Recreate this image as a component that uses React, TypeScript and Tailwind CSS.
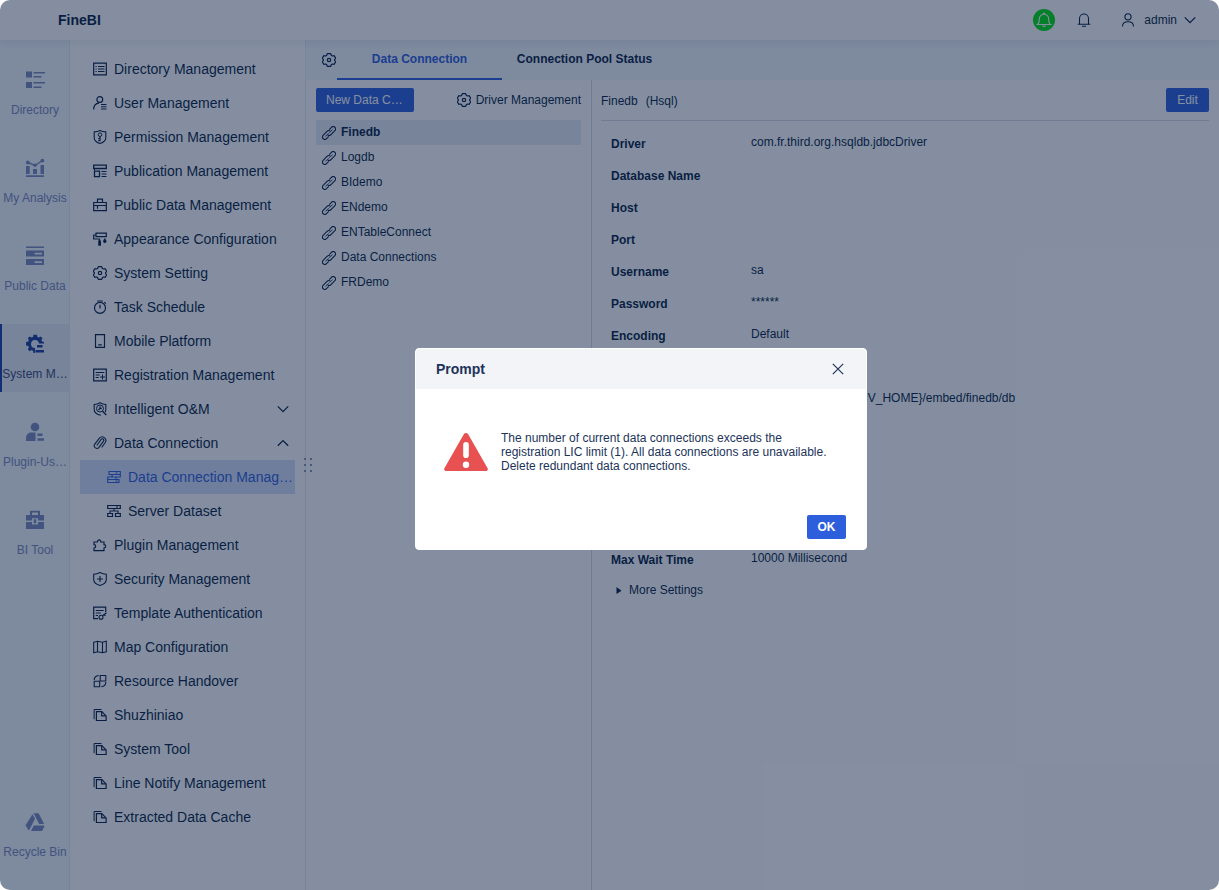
import { useState } from "react";
import type { ReactNode } from "react";

interface IconProps {
  children: ReactNode;
}

// Outline icons share a 14px grid, the rail icons a 20px one
function LineIcon({ children }: IconProps) {
  return (
    <svg
      className="size-3.5 shrink-0"
      viewBox="0 0 14 14"
      fill="none"
      stroke="currentColor"
      aria-hidden="true"
    >
      {children}
    </svg>
  );
}

function RailIcon({ children }: IconProps) {
  return (
    <svg className="size-5 shrink-0" viewBox="0 0 20 20" fill="currentColor" aria-hidden="true">
      {children}
    </svg>
  );
}

function GearIcon() {
  return (
    <LineIcon>
      <path d="M5.3 .7h3.4l.7 1.7 1 .6 1.8-.3 1.5 2.6-1.1 1.3v.8l1.1 1.3-1.5 2.6-1.8-.3-1 .6-.7 1.7H5.3l-.7-1.7-1-.6-1.800.3L.3 8.700l1.100-1.300v-.8L.3 5.300l1.500-2.600 1.800.3 1-.6z" strokeWidth="1.2" strokeLinejoin="round" />
      <circle cx="7" cy="7" r="1.7" strokeWidth="1.2" />
    </LineIcon>
  );
}

function LinkIcon() {
  return (
    <LineIcon>
      <g transform="rotate(-45 7 7)" strokeWidth="1.1">
        <path d="M9.300 6.500A2.400 2.400 0 0 0 7 4.500H1.200a2.400 2.400 0 0 0 0 4.800h3.200" />
        <path d="M4.700 7.500A2.400 2.400 0 0 0 7 9.500h5.800a2.400 2.400 0 0 0 0-4.800H9.600" />
        <path d="M2 6.900h4.500M7.500 7.100H12" strokeWidth=".8" />
      </g>
    </LineIcon>
  );
}

function CopyIcon() {
  return (
    <LineIcon>
      <path d="M1.100 11.200V1.500h7.400" />
      <path d="M3.400 3.600h5.400l4.300 4.300v4.600H3.400z" strokeWidth="1.2" />
      <path d="M8.700 3.600v4.200h4.200" strokeWidth="1.2" />
    </LineIcon>
  );
}

function Chevron({ up = false }: { up?: boolean }) {
  return (
    <svg className="size-3 shrink-0" viewBox="0 0 12 12" fill="none" stroke="currentColor" strokeWidth="1.3" aria-hidden="true">
      <path d={up ? "M.8 8.8 6 3.6l5.2 5.2" : "M.8 3.4 6 8.6l5.2-5.2"} />
    </svg>
  );
}

const railItems = [
  {
    label: "Directory",
    icon: (
      <RailIcon>
        <path d="M1 1.500h6v6H1zM1 12h6v6H1zM8.500 2H20v1.600H8.500zM8.500 6h8v1.600h-8zM8.500 12H20v1.600H8.500zM8.500 16.400h8V18h-8z" />
      </RailIcon>
    ),
  },
  {
    label: "My Analysis",
    icon: (
      <RailIcon>
        <path d="M1 8h3.700v8H1zM8 11h4v5H8zM15.500 7H19v9h-3.500zM1 17.200h18V19H1z" />
        <path d="m3 4.500 7 3 7.500-5" fill="none" stroke="currentColor" strokeWidth="1.5" />
        <circle cx="2.8" cy="4.5" r="1.9" />
        <circle cx="10" cy="7.3" r="1.7" />
        <circle cx="17.400" cy="2.6" r="1.900" />
      </RailIcon>
    ),
  },
  {
    label: "Public Data",
    icon: (
      <RailIcon>
        <path d="M1 .500h18V2H1z" />
        <path fillRule="evenodd" d="M1 4.500h18v6H1zM9.500 6.700v1.700H17V6.700zM1 13h18v6H1zM9.500 15.200v1.700H17v-1.700z" />
      </RailIcon>
    ),
  },
  {
    label: "System M…",
    icon: (
      <RailIcon>
        <path d="M10 17v-3a4 4 0 1 1 4-4.500h5V8l-2-.5-.6-1.500 1.100-1.800-1.800-1.800-1.800 1.100-1.500-.6L12 .8H8.500L8 2.900l-1.500.6-1.800-1.100-1.900 1.900 1.100 1.800-.6 1.500-2.200.5v3.400l2.200.5.6 1.500-1.100 1.800 1.900 1.900 1.800-1.100 1.500.6.5 2.200H10z" />
        <path d="M12 11h5.500v2.500H12zM10.500 16H19v2.500h-8.500z" />
      </RailIcon>
    ),
  },
  {
    label: "Plugin-Us…",
    icon: (
      <RailIcon>
        <circle cx="10" cy="5" r="4.3" />
        <path d="M10.500 10.500V19H1v-3c0-3.500 2.500-5.500 5.500-5.500zM12.500 11.500h5V14h-5zM12.500 16.200H19v2.500h-6.500z" />
      </RailIcon>
    ),
  },
  {
    label: "BI Tool",
    icon: (
      <RailIcon>
        <path fillRule="evenodd" d="M5 .8h10V5h4v5.500h-6V8.300H7v2.200H1V5h4zM7 2.500V5h6V2.500z" />
        <path d="M8.800 9.300h2.400v4H8.800zM1 12h6v2.500h6V12h6v7H1z" />
      </RailIcon>
    ),
  },
];

interface MenuItem {
  label: string;
  icon: ReactNode;
  sub?: boolean;
  active?: boolean;
  chevron?: "up" | "down";
}

const menuItems: MenuItem[] = [
  {
    label: "Directory Management",
    icon: (
      <LineIcon>
        <path d="M.7 1.200h12.600v11.600H.7z" strokeWidth="1.2" />
        <path d="M5 4.500h6.500M5 7h6.500M5 9.500h6.500M2.500 4.500h1.200M2.500 7h1.200M2.500 9.500h1.200" />
      </LineIcon>
    ),
  },
  {
    label: "User Management",
    icon: (
      <LineIcon>
        <circle cx="6.8" cy="3.5" r="2.9" strokeWidth="1.2" />
        <path d="M.7 13.500c0-3.600 1.900-6 5.300-6.300" strokeWidth="1.2" />
        <path d="M8 8.500h5.500M8 10.800h5.500M8 13h5.500" />
      </LineIcon>
    ),
  },
  {
    label: "Permission Management",
    icon: (
      <LineIcon>
        <path d="M7 .6c1.800 1 3.600 1.300 5.800 1.300v5.800c0 2.800-2.500 4.700-5.800 5.800-3.300-1.100-5.800-3-5.800-5.800V1.900C3.400 1.900 5.200 1.600 7 .6z" strokeWidth="1.1" />
        <circle cx="7" cy="4.700" r="1.8" />
        <path d="M7 6.400v4.800M7 8.500H5.200M7 10.600H5.200" strokeWidth="1.2" />
      </LineIcon>
    ),
  },
  {
    label: "Publication Management",
    icon: (
      <LineIcon>
        <path d="M.7 1.200h12.600v3.300H.7zM1.500 7.200h5v5.500h-5z" strokeWidth="1.3" />
        <path d="M1.500 4.500v2M8.500 7.500h5M8.500 10h5M8.500 12.500h5" />
      </LineIcon>
    ),
  },
  {
    label: "Public Data Management",
    icon: (
      <LineIcon>
        <path d="M.7 4.500h12.600v8.200H.7zM4.500 4.500V1.200h5v3.300M1 7.500h12M4.500 7.500v3.200" strokeWidth="1.2" />
      </LineIcon>
    ),
  },
  {
    label: "Appearance Configuration",
    icon: (
      <LineIcon>
        <path d="M3 1.200h10.300v3.500H3zM3 3H.7v4h5.800v2" strokeWidth="1.2" />
        <path d="M5.200 8.500h2.800v5.300H5.200zM11.800 6l1.500 2.500a1.700 1.700 0 1 1-3 0z" fill="currentColor" stroke="none" />
      </LineIcon>
    ),
  },
  { label: "System Setting", icon: <GearIcon /> },
  {
    label: "Task Schedule",
    icon: (
      <LineIcon>
        <circle cx="7" cy="7.900" r="5.500" strokeWidth="1.2" />
        <path d="M4.200 1h5.600M7 4.800v3.700M11.300 2.200l1.500 1.500" strokeWidth="1.2" />
      </LineIcon>
    ),
  },
  {
    label: "Mobile Platform",
    icon: (
      <LineIcon>
        <path d="M2.500.7h9v12.600h-9zM5.200 10.800h3.600" strokeWidth="1.2" />
      </LineIcon>
    ),
  },
  {
    label: "Registration Management",
    icon: (
      <LineIcon>
        <path d="M.7 1.200h12.600v11.600H.7z" strokeWidth="1.200" />
        <path d="M2.700 4.500h8.600M2.700 7h4M2.700 9.500h3M9.500 6.500v5M7 9h5" />
      </LineIcon>
    ),
  },
  {
    label: "Intelligent O&M",
    chevron: "down",
    icon: (
      <LineIcon>
        <path d="M8 13.300C4 12.500 1.200 10.500 1.200 7.500v-5C3.500 2.300 5 1.800 7 .7c2 1.100 3.500 1.600 5.800 1.800v5c0 1-.2 1.800-.7 2.600" strokeWidth="1.1" />
        <circle cx="7" cy="6.500" r="3.500" />
        <path d="m9.500 9.200 3.800 3.800M5.500 8l2.200-2.200M7 4.500l.2 1.600 1.600.4" strokeWidth="1.3" />
      </LineIcon>
    ),
  },
  {
    label: "Data Connection",
    chevron: "up",
    icon: (
      <LineIcon>
        <path d="m3.800 9.500 4.500-6.300a1.500 1.500 0 0 1 2.400 1.700l-4.700 6.500a2.700 2.700 0 0 1-4.400-3.100l4.800-6.200a3.700 3.700 0 0 1 5.900 4.400l-3.600 5" strokeWidth="1.1" />
      </LineIcon>
    ),
  },
  {
    label: "Data Connection Management",
    sub: true,
    active: true,
    icon: (
      <LineIcon>
        <path d="M2 1.500h11.300v3H2zM.7 9.500H12v3H.7zM8.500 3h2M8.500 11h2" strokeWidth="1.1" />
        <path d="M.7 9.500V7h5.800M13.300 4.500V7H8M4.500 5.500 6.500 7M9.500 8.500 7.500 7" strokeWidth="1.1" />
      </LineIcon>
    ),
  },
  {
    label: "Server Dataset",
    sub: true,
    icon: (
      <LineIcon>
        <path d="M.7 1.500h12.600v3H.7zM.7 9.500h4.800v3H.7zM8.500 9.500h4.800v3H8.500z" strokeWidth="1.2" />
        <path d="M7 4.500V7M3 9.500V7h8v2.500M9 3h2" strokeWidth="1.1" />
      </LineIcon>
    ),
  },
  {
    label: "Plugin Management",
    icon: (
      <LineIcon>
        <path d="M1 4h3.500a1.700 1.700 0 1 1 3.300 0h3.200v2.600a1.700 1.700 0 1 1 0 3.400v2.700H1V10a1.700 1.700 0 0 0 0-3.400z" strokeWidth="1.2" />
      </LineIcon>
    ),
  },
  {
    label: "Security Management",
    icon: (
      <LineIcon>
        <path d="M7 .5c2 1.100 4 1.600 6.300 1.700v5.300c0 2.900-2.600 4.900-6.300 6-3.700-1.100-6.300-3.100-6.300-6V2.200C3 2.100 5 1.600 7 .5zM7 4v6M4 7h6" strokeWidth="1.1" />
      </LineIcon>
    ),
  },
  {
    label: "Template Authentication",
    icon: (
      <LineIcon>
        <path d="M12.700 6V1.200H.7v11.400h4.300" strokeWidth="1.2" />
        <path d="M2.700 4.500h8M2.700 7h5M2.700 9.500h2.300" />
        <circle cx="8" cy="11.200" r="2" strokeWidth="1.1" />
        <path d="m9.500 9.700 4-3M11.200 8.500l1.200 1.500" strokeWidth="1.2" />
      </LineIcon>
    ),
  },
  {
    label: "Map Configuration",
    icon: (
      <LineIcon>
        <path d="m.7 2.200 3.800-1 5 1 3.800-1v10.600l-3.800 1-5-1-3.800 1zM4.500 1.200v10.600M9.500 2.200v10.600" strokeWidth="1.1" />
      </LineIcon>
    ),
  },
  {
    label: "Resource Handover",
    icon: (
      <LineIcon>
        <path d="M1.200 7.200h5.500v5.500H1.200zM7.200 1.500h5.600V7H7.200zM1.200 6C1.200 3.500 3 1.800 5.700 1.500M12.800 8c0 2.500-1.800 4.400-4.500 4.700" strokeWidth="1.1" />
      </LineIcon>
    ),
  },
  { label: "Shuzhiniao", icon: <CopyIcon /> },
  { label: "System Tool", icon: <CopyIcon /> },
  { label: "Line Notify Management", icon: <CopyIcon /> },
  { label: "Extracted Data Cache", icon: <CopyIcon /> },
];

const connections = ["Finedb", "Logdb", "BIdemo", "ENdemo", "ENTableConnect", "Data Connections", "FRDemo"];

const basicFields = [
  ["Driver", "com.fr.third.org.hsqldb.jdbcDriver"],
  ["Database Name", ""],
  ["Host", ""],
  ["Port", ""],
  ["Username", "sa"],
  ["Password", "******"],
  ["Encoding", "Default"],
  ["", ""],
  ["", "jdbc:hsqldb:file://${ENV_HOME}/embed/finedb/db"],
];

const poolFields = [["Max Wait Time", "10000 Millisecond"]];

function Header() {
  return (
    <header className="relative z-10 flex h-10 shrink-0 items-center bg-white pr-[23px] pl-[58px] shadow-[0_2px_8px_rgba(9,30,64,0.09)]">
      <h1 className="flex-1 text-sm font-bold">FineBI</h1>
      <button
        type="button"
        aria-label="Assistant"
        className="mr-[22px] flex size-[22px] items-center justify-center rounded-full bg-[#00e010] text-white"
      >
        <svg className="size-4" viewBox="0 0 16 16" fill="none" stroke="currentColor" strokeWidth="1.1" aria-hidden="true">
          <path d="M1.500 12.500c1.500-1 1.800-2 1.800-5.500a4.700 4.700 0 0 1 9.400 0c0 3.500.3 4.500 1.800 5.500z" />
          <path d="M6.500 13.500a1.600 1.600 0 0 0 3 0M7 2c0-1.300 2-1.300 2 0" />
        </svg>
      </button>
      <button type="button" aria-label="Notifications" className="mr-[30px]">
        <LineIcon>
          <path d="M2.500 11V5.500a4.500 4.500 0 0 1 9 0V11M.7 11.200h12.600M5 13.300h4" strokeWidth="1.1" />
        </LineIcon>
      </button>
      <button type="button" className="flex items-center text-xs">
        <LineIcon>
          <circle cx="7" cy="3.8" r="3.1" strokeWidth="1.1" />
          <path d="M1.500 13.500c0-3 2.200-4.700 5.500-4.700s5.500 1.700 5.500 4.700" strokeWidth="1.1" />
        </LineIcon>
        <span className="mr-[7px] ml-[9px]">admin</span>
        <Chevron />
      </button>
    </header>
  );
}

interface RailButtonProps {
  label: string;
  icon: ReactNode;
  active?: boolean;
}

function RailButton({ label, icon, active }: RailButtonProps) {
  return (
    <button
      type="button"
      className={`flex h-17 w-full flex-col items-center border-l-2 pt-2.5 pr-px text-xs ${
        active ? "border-[#1c3fa8] bg-[#e6eaf3] text-[#1c3f9c]" : "border-transparent text-[#7c88bc]"
      }`}
    >
      {icon}
      <span className={`-mx-2 mt-3 leading-4 whitespace-nowrap ${active ? "text-[#3c4a78]" : ""}`}>{label}</span>
    </button>
  );
}

function Rail() {
  return (
    <nav className="flex w-[70px] shrink-0 flex-col gap-5 border-r border-[#e6ebf3] bg-[#f2f7fb] py-5">
      {railItems.map((item) => (
        <RailButton key={item.label} {...item} active={item.label === "System M…"} />
      ))}
      <div className="mt-auto">
        <RailButton
          label="Recycle Bin"
          icon={
            <RailIcon>
              <path d="M7.500 2.200 10 6.800 4.400 17.800 3.300 17.900.5 13.300 1 12.400zM8.600 1.300h4.600l.8.7 5.200 10h-5.100zM8.800 13.600h10.500v1.200l-2 3.800-.8.400H6z" />
            </RailIcon>
          }
        />
      </div>
    </nav>
  );
}

function Sidebar() {
  return (
    <aside className="w-[236px] shrink-0 border-r border-[#e6ebf3] bg-white px-2.5 pt-3">
      <ul>
        {menuItems.map((item) => (
          <li key={item.label}>
            <button
              type="button"
              className={`flex h-[34px] w-full items-center gap-[7px] text-left text-sm ${
                item.sub ? "pl-[27px]" : "pl-[13px]"
              } ${item.active ? "bg-[#d6dff8] text-[#2d5edc]" : ""}`}
            >
              {item.icon}
              <span className="min-w-0 flex-1 truncate">{item.label}</span>
              {item.chevron && (
                <span className="pr-1.5">
                  <Chevron up={item.chevron === "up"} />
                </span>
              )}
            </button>
          </li>
        ))}
      </ul>
    </aside>
  );
}

function ConnectionList() {
  const [selected, setSelected] = useState("Finedb");

  return (
    <section className="w-[286px] shrink-0 border-r border-[#d4dbe6] px-2.5 pt-2">
      <div className="mb-2 flex items-center justify-between">
        <button type="button" className="h-6 w-[98px] rounded-xs bg-[#2d5edc] px-2.5 text-left text-xs text-white">
          New Data C…
        </button>
        <button type="button" className="flex items-center gap-[5px] text-xs">
          <GearIcon />
          Driver Management
        </button>
      </div>
      <ul>
        {connections.map((name) => (
          <li key={name}>
            <button
              type="button"
              onClick={() => setSelected(name)}
              className={`flex h-[25px] w-full items-center gap-[5px] pb-0.5 pl-1.5 text-left text-xs ${
                selected === name ? "bg-[#e6eaf3] font-bold" : ""
              }`}
            >
              <span className="pt-0.5">
                <LinkIcon />
              </span>
              {name}
            </button>
          </li>
        ))}
      </ul>
    </section>
  );
}

function FieldList({ fields }: { fields: string[][] }) {
  return (
    <dl className="pl-2.5">
      {fields.map(([label, value], index) => (
        <div key={index} className="flex h-8 items-start">
          <dt className="w-[140px] shrink-0 leading-8 font-bold">{label}</dt>
          <dd className="leading-7">{value}</dd>
        </div>
      ))}
    </dl>
  );
}

function ConnectionDetail() {
  return (
    <section className="min-w-0 flex-1 pr-2.5 pl-[9px] text-xs">
      <div className="mb-[7px] flex h-[41px] items-center justify-between border-b border-[#d4dbe6]">
        <h2 className="pt-0.5">
          Finedb<span className="ml-2">(Hsql)</span>
        </h2>
        <button type="button" className="h-6 w-[43px] rounded-xs bg-[#2d5edc] text-white">
          Edit
        </button>
      </div>
      <FieldList fields={basicFields} />
      <div className="mt-32">
        <FieldList fields={poolFields} />
      </div>
      <button type="button" className="mt-1.5 ml-[15px] flex items-center gap-[7px]">
        <svg className="h-2 w-1.5" viewBox="0 0 6 8" fill="currentColor" aria-hidden="true">
          <path d="M.5 1 5.500 4.700l-5 3.300z" />
        </svg>
        More Settings
      </button>
    </section>
  );
}

function PromptDialog({ onClose }: { onClose: () => void }) {
  return (
    <div className="absolute inset-0 z-20 flex items-center justify-center bg-[#0a1e42]/50 pt-2 pl-[63px]">
      <div
        role="dialog"
        aria-modal="true"
        aria-labelledby="prompt-title"
        className="w-[452px] rounded-sm border border-white bg-white text-[#22335a]"
      >
        <div className="flex h-10 items-center justify-between rounded-t-sm bg-[#f2f4f8] px-5">
          <h2 id="prompt-title" className="text-sm font-bold">
            Prompt
          </h2>
          <button type="button" aria-label="Close" onClick={onClose} className="p-0.5">
            <svg className="size-3" viewBox="0 0 12 12" fill="none" stroke="currentColor" strokeWidth="1.2" aria-hidden="true">
              <path d="m.8.8 10.400 10.400M11.200.8.8 11.200" />
            </svg>
          </button>
        </div>
        <div className="flex h-[126px] items-center gap-[13px] pr-9 pl-7">
          <svg className="h-[38px] w-11 shrink-0" viewBox="0 0 44 38" aria-hidden="true">
            <path d="M19.800 1.300a2.600 2.600 0 0 1 4.400 0l19.400 34a1.700 1.700 0 0 1-1.500 2.600H1.900a1.700 1.700 0 0 1-1.500-2.600z" fill="#e85151" />
            <rect x="19.200" y="9" width="5.600" height="16" rx="2.800" fill="white" />
            <circle cx="22" cy="31.700" r="3.200" fill="white" />
          </svg>
          <p className="text-xs leading-3.5">
            The number of current data connections exceeds the registration LIC limit (1). All data connections are
            unavailable. Delete redundant data connections.
          </p>
        </div>
        <div className="flex justify-end pr-5 pb-2.5">
          <button type="button" onClick={onClose} className="h-6 w-[39px] rounded-xs bg-[#2d5edc] text-xs font-bold text-white">
            OK
          </button>
        </div>
      </div>
    </div>
  );
}

export default function App() {
  const [promptOpen, setPromptOpen] = useState(true);

  return (
    <div className="relative flex min-h-screen flex-col overflow-hidden rounded-[10px] bg-white font-['Liberation_Sans',Arial,sans-serif] text-[#0a1f44]">
      <Header />
      <div className="flex flex-1">
        <Rail />
        <Sidebar />
        <main className="relative flex min-w-0 flex-1 flex-col">
          {/* drag handle on the sidebar edge */}
          <div className="absolute top-[418px] -left-0.5 grid grid-cols-2 gap-1">
            {[0, 1, 2, 3, 4, 5].map((dot) => (
              <span key={dot} className="size-0.5 bg-[#8a95ab]" />
            ))}
          </div>
          <div className="flex h-10 shrink-0 bg-[#f2f7fb] text-xs font-bold">
            <button type="button" aria-label="Settings" className="pl-4">
              <GearIcon />
            </button>
            <div role="tablist" className="flex pl-px">
              <button type="button" role="tab" aria-selected="true" className="w-[165px] border-b-2 border-[#2d5edc] text-[#2d5edc]">
                Data Connection
              </button>
              <button type="button" role="tab" aria-selected="false" className="w-[165px] border-b-2 border-transparent">
                Connection Pool Status
              </button>
            </div>
          </div>
          <div className="flex flex-1">
            <ConnectionList />
            <ConnectionDetail />
          </div>
        </main>
      </div>
      {promptOpen && <PromptDialog onClose={() => setPromptOpen(false)} />}
    </div>
  );
}
